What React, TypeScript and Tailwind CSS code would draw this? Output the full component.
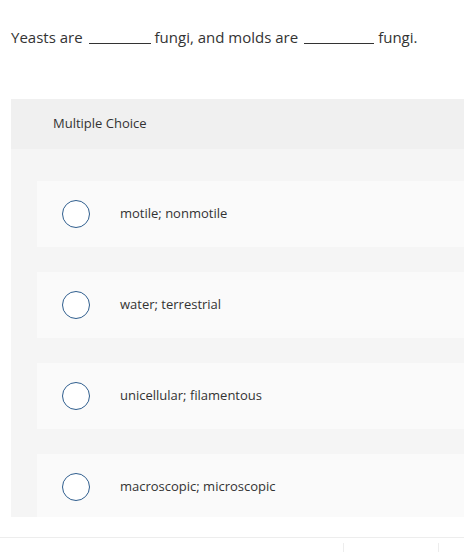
const options = [
  "motile; nonmotile",
  "water; terrestrial",
  "unicellular; filamentous",
  "macroscopic; microscopic",
];

function Blank({ w }: { w: string }) {
  return <span className={`inline-block ${w} border-b border-[#333] translate-y-[1px] ml-[6px] mr-[4px]`} />;
}

export default function App() {
  return (
    <div className="w-[464px] h-[552px] bg-white overflow-hidden text-[#333]" style={{ fontFamily: '"Open Sans", Lato, sans-serif' }}>
      <p className="pl-[11px] pt-[27px] text-[15px] leading-[20px] whitespace-nowrap">
        Yeasts are<Blank w="w-[62px]" />fungi, and molds are<Blank w="w-[70px]" />fungi.
      </p>

      <div className="ml-[11px] mt-[52px]">
        <div className="h-[50px] bg-[#f0f0f0] pl-[42px] flex items-center text-[13px]">
          Multiple Choice
        </div>
        <div className="h-[368px] bg-[#f5f5f5] pl-[26px] pt-[32px] overflow-hidden flex flex-col gap-[25px]">
          {options.map((o) => (
            <div key={o} className="h-[66px] shrink-0 bg-[#fafafa] flex items-center">
              <span className="ml-[25px] w-[28px] h-[28px] rounded-full border-[1.5px] border-[#2f5e8e] bg-white shrink-0" />
              <span className="ml-[30px] text-[13px]">{o}</span>
            </div>
          ))}
        </div>
      </div>

      <div className="mt-[20px] border-t border-[#ededed] flex h-[20px]">
        <div className="w-[343px]" />
        <div className="w-[96px] border-l border-r border-[#ededed] mt-[5px]" />
      </div>
    </div>
  );
}
